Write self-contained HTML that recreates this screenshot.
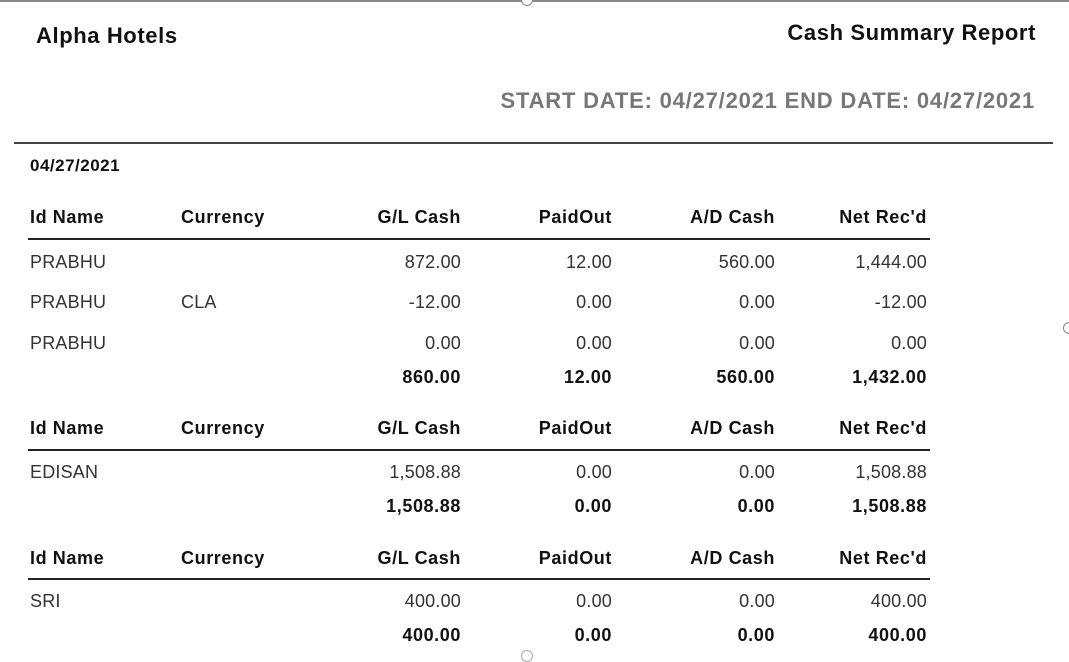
<!DOCTYPE html>
<html><head><meta charset="utf-8"><style>
body{margin:0;width:1069px;height:655px;background:#fff;position:relative;overflow:hidden;font-family:"Liberation Sans",Arial,sans-serif;}
.t{position:absolute;line-height:20px;height:20px;white-space:nowrap;}
.b{font-weight:bold;color:#111;}
.h{font-weight:bold;color:#111;font-size:18px;letter-spacing:0.6px;}
.d{color:#333;font-size:18px;letter-spacing:0.2px;}
.r{text-align:right;width:200px;}
.ln{position:absolute;left:28px;width:902px;height:2px;background:#222;}
</style></head><body>
<div style="position:absolute;left:0;top:0;width:1069px;height:2px;background:#888"></div>
<div style="position:absolute;left:521px;top:-6px;width:10px;height:10px;border:1.5px solid #888;border-radius:50%;background:#fff"></div>
<div style="position:absolute;left:1063px;top:322px;width:10px;height:10px;border:1.5px solid #888;border-radius:50%;background:#fff"></div>
<div style="position:absolute;left:521px;top:650px;width:10px;height:10px;border:1.5px solid #aaa;border-radius:50%;background:#fff"></div>
<div class="t b" style="left:36px;top:26px;font-size:22px;letter-spacing:0.6px;">Alpha Hotels</div>
<div class="t b" style="left:536px;width:500px;text-align:right;top:23px;font-size:22px;letter-spacing:0.6px;">Cash Summary Report</div>
<div class="t" style="left:335px;width:700px;text-align:right;top:91px;font-size:22px;letter-spacing:0.8px;font-weight:bold;color:#777;">START DATE: 04/27/2021 END DATE: 04/27/2021</div>
<div style="position:absolute;left:14px;top:142px;width:1039px;height:2px;background:#444"></div>
<div class="t b" style="left:30px;top:156px;font-size:17px;letter-spacing:0.5px;">04/27/2021</div>

<div class="t h" style="left:30px;top:207px">Id Name</div>
<div class="t h" style="left:181px;top:207px">Currency</div>
<div class="t h r" style="left:261px;top:207px">G/L Cash</div>
<div class="t h r" style="left:412px;top:207px">PaidOut</div>
<div class="t h r" style="left:575px;top:207px">A/D Cash</div>
<div class="t h r" style="left:727px;top:207px">Net Rec'd</div>
<div class="ln" style="top:238px"></div>

<div class="t d" style="left:30px;top:252px">PRABHU</div>
<div class="t d r" style="left:261px;top:252px">872.00</div>
<div class="t d r" style="left:412px;top:252px">12.00</div>
<div class="t d r" style="left:575px;top:252px">560.00</div>
<div class="t d r" style="left:727px;top:252px">1,444.00</div>

<div class="t d" style="left:30px;top:292px">PRABHU</div>
<div class="t d" style="left:181px;top:292px">CLA</div>
<div class="t d r" style="left:261px;top:292px">-12.00</div>
<div class="t d r" style="left:412px;top:292px">0.00</div>
<div class="t d r" style="left:575px;top:292px">0.00</div>
<div class="t d r" style="left:727px;top:292px">-12.00</div>

<div class="t d" style="left:30px;top:333px">PRABHU</div>
<div class="t d r" style="left:261px;top:333px">0.00</div>
<div class="t d r" style="left:412px;top:333px">0.00</div>
<div class="t d r" style="left:575px;top:333px">0.00</div>
<div class="t d r" style="left:727px;top:333px">0.00</div>

<div class="t h r" style="left:261px;top:367px">860.00</div>
<div class="t h r" style="left:412px;top:367px">12.00</div>
<div class="t h r" style="left:575px;top:367px">560.00</div>
<div class="t h r" style="left:727px;top:367px">1,432.00</div>

<div class="t h" style="left:30px;top:418px">Id Name</div>
<div class="t h" style="left:181px;top:418px">Currency</div>
<div class="t h r" style="left:261px;top:418px">G/L Cash</div>
<div class="t h r" style="left:412px;top:418px">PaidOut</div>
<div class="t h r" style="left:575px;top:418px">A/D Cash</div>
<div class="t h r" style="left:727px;top:418px">Net Rec'd</div>
<div class="ln" style="top:449px"></div>

<div class="t d" style="left:30px;top:462px">EDISAN</div>
<div class="t d r" style="left:261px;top:462px">1,508.88</div>
<div class="t d r" style="left:412px;top:462px">0.00</div>
<div class="t d r" style="left:575px;top:462px">0.00</div>
<div class="t d r" style="left:727px;top:462px">1,508.88</div>

<div class="t h r" style="left:261px;top:496px">1,508.88</div>
<div class="t h r" style="left:412px;top:496px">0.00</div>
<div class="t h r" style="left:575px;top:496px">0.00</div>
<div class="t h r" style="left:727px;top:496px">1,508.88</div>

<div class="t h" style="left:30px;top:548px">Id Name</div>
<div class="t h" style="left:181px;top:548px">Currency</div>
<div class="t h r" style="left:261px;top:548px">G/L Cash</div>
<div class="t h r" style="left:412px;top:548px">PaidOut</div>
<div class="t h r" style="left:575px;top:548px">A/D Cash</div>
<div class="t h r" style="left:727px;top:548px">Net Rec'd</div>
<div class="ln" style="top:578px"></div>

<div class="t d" style="left:30px;top:591px">SRI</div>
<div class="t d r" style="left:261px;top:591px">400.00</div>
<div class="t d r" style="left:412px;top:591px">0.00</div>
<div class="t d r" style="left:575px;top:591px">0.00</div>
<div class="t d r" style="left:727px;top:591px">400.00</div>

<div class="t h r" style="left:261px;top:625px">400.00</div>
<div class="t h r" style="left:412px;top:625px">0.00</div>
<div class="t h r" style="left:575px;top:625px">0.00</div>
<div class="t h r" style="left:727px;top:625px">400.00</div>
</body></html>
